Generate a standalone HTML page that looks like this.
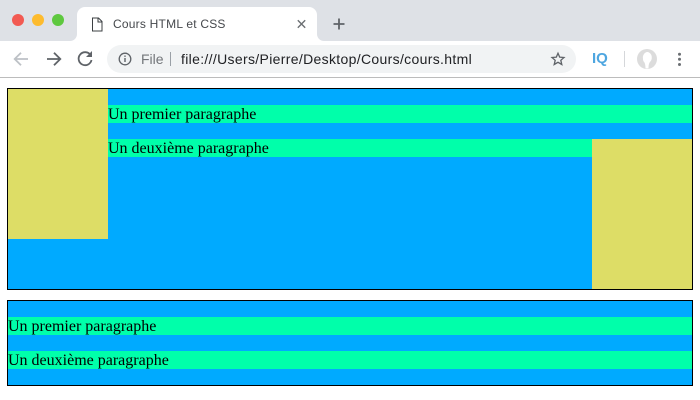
<!DOCTYPE html>
<html><head><meta charset="utf-8">
<style>
html,body{margin:0;padding:0;width:700px;height:400px;overflow:hidden;background:#fff}
.a{position:absolute}
#chrome{left:0;top:0;width:700px;height:41px;background:#dee1e6}
#tab{left:77px;top:7px;width:240px;height:34px;background:#fff;border-radius:8px 8px 0 0}
.ui{font-family:"Liberation Sans",sans-serif;white-space:nowrap}
.dot{width:12px;height:12px;border-radius:50%;top:14px}
#omni{left:107px;top:45px;width:469px;height:28px;background:#f1f3f4;border-radius:14px}
#line{left:0;top:77px;width:700px;height:1px;background:#bcbcbc}
.box{left:7px;width:684px;border:1px solid #000;background:#00aaff}
.p{height:18px;background:#00ffaa;font:16px/20px "Liberation Serif",serif;color:#000;white-space:nowrap}
.f{width:100px;height:150px;background:#dddd66}
</style></head><body>
<div class="a" id="chrome"></div>
<div class="a dot" style="left:12px;background:#f25a52"></div>
<div class="a dot" style="left:32px;background:#fdbb2e"></div>
<div class="a dot" style="left:52px;background:#5ec83f"></div>
<div class="a" id="tab"></div>
<div class="a" id="omni"></div>
<svg class="a" style="left:0;top:0" width="700" height="80" fill="none">
<path d="M70 41a7 7 0 0 0 7-7v7zM317 34a7 7 0 0 0 7 7h-7z" fill="#fff"/>
<path d="M92.500 18h6l3.500 3.500v9.500h-9.500zM98 18v4h4" stroke="#3c4043" stroke-width="1"/>
<path d="M297.800 20.300l7.400 7.400M305.200 20.300l-7.400 7.400" stroke="#6b6f73" stroke-width="1.400"/>
<path d="M339 18.500v11M333.500 24h11" stroke="#5f6368" stroke-width="1.800"/>
<path d="M28 59H15M21 52.700L14.700 59L21 65.300" stroke="#bdc1c6" stroke-width="1.800"/>
<path d="M47 59H60M54 52.700L60.300 59L54 65.300" stroke="#5f6368" stroke-width="1.800"/>
<path d="M90.500 55a6.500 6.500 0 1 0 1 5" stroke="#5f6368" stroke-width="1.800"/>
<path d="M92 51v6h-6z" fill="#5f6368"/>
<circle cx="125" cy="59" r="5.800" stroke="#5f6368" stroke-width="1.300"/>
<path d="M125 58v4M125 55.500v1.400" stroke="#5f6368" stroke-width="1.400"/>
<path d="M170.500 52v14" stroke="#9aa0a6" stroke-width="1"/>
<path d="M558 53.200l1.700 3.900 4.300.4-3.200 2.800 1 4.200-3.800-2.200-3.800 2.200 1-4.200-3.200-2.800 4.300-.4z" stroke="#5f6368" stroke-width="1.300"/>
<path d="M624.500 51v16" stroke="#d5d7da" stroke-width="1"/>
<circle cx="647" cy="59" r="10" fill="#dcdcdc"/>
<path d="M643 59a4.500 5.500 0 1 1 7 3c-1 1-1.500 3-1.500 6.500h-3c0-3-.5-5-1-6-1-1-1.500-2-1.500-3.500z" fill="#fff"/>
<circle cx="679.500" cy="54.300" r="1.500" fill="#6b6f73"/><circle cx="679.500" cy="59.300" r="1.500" fill="#6b6f73"/><circle cx="679.500" cy="64.500" r="1.500" fill="#6b6f73"/>
</svg>
<div class="a ui" style="left:113px;top:16px;font-size:12px;line-height:16px;color:#45484c;letter-spacing:.22px">Cours HTML et CSS</div>
<div class="a ui" style="left:141px;top:51px;font-size:14px;line-height:16px;color:#73767a">File</div>
<div class="a ui" style="left:181px;top:51px;font-size:14px;line-height:16px;color:#202124;letter-spacing:.33px">file:///Users/Pierre/Desktop/Cours/cours.html</div>
<div class="a ui" style="left:592px;top:50px;font-size:15px;line-height:18px;font-weight:bold;color:#4ea6e0">IQ</div>
<div class="a" id="line"></div>

<div class="a box" style="top:88px;height:200px">
  <div class="a f" style="left:0;top:0"></div>
  <div class="a f" style="left:584px;top:50px"></div>
  <div class="a p" style="left:100px;top:16px;width:584px">Un premier paragraphe</div>
  <div class="a p" style="left:100px;top:50px;width:484px">Un deuxième paragraphe</div>
</div>
<div class="a box" style="top:300px;height:84px">
  <div class="a p" style="left:0;top:16px;width:684px">Un premier paragraphe</div>
  <div class="a p" style="left:0;top:50px;width:684px">Un deuxième paragraphe</div>
</div>
</body></html>
